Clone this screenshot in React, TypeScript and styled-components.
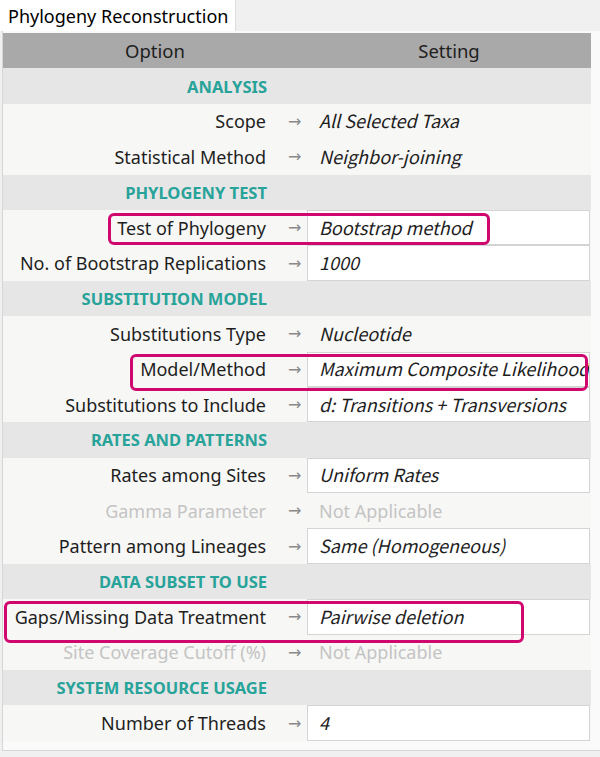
import React from "react";
import styled, { createGlobalStyle } from "styled-components";

const Global = createGlobalStyle`
  html, body { margin: 0; padding: 0; background: #f0f0f0; }
  body { font-family: "Noto Sans", "Open Sans", sans-serif; }
`;

const Page = styled.div`
  width: 600px;
  height: 757px;
  background: #f0f0f0;
  overflow: hidden;
`;

const TabBar = styled.div`
  display: flex;
  height: 31px;
`;

const Tab = styled.div`
  width: 227px;
  padding-left: 8px;
  background: #ffffff;
  border-right: 1px solid #dcdcdc;
  display: flex;
  align-items: center;
  font-size: 18px;
  color: #000;
`;

const Panel = styled.div`
  margin-left: 2px;
  width: 593px;
  border: 1px solid #d6d6d6;
  border-top: none;
  background: #fafafa;
  padding: 2px 5px 9px 0;
`;

const Table = styled.div`
  display: flex;
  flex-direction: column;
  width: 588px;
`;

const Row = styled.div<{ $kind: "header" | "section" | "item" }>`
  position: relative;
  display: grid;
  grid-template-columns: 265px 39px 1fr;
  height: 35.4px;
  align-items: stretch;
  background: ${(p) =>
    p.$kind === "header" ? "#a9a9a9" : p.$kind === "section" ? "#e6e6e6" : "#f7f7f5"};
`;

const HeaderCell = styled.div<{ $span: string }>`
  grid-column: ${(p) => p.$span};
  display: flex;
  align-items: center;
  justify-content: center;
  font-size: 18.5px;
  color: #1e1e1e;
`;

const SectionTitle = styled.div`
  grid-column: 1 / 2;
  display: flex;
  align-items: center;
  justify-content: flex-end;
  padding-right: 1px;
  font-size: 16.5px;
  font-weight: 700;
  color: #27a39a;
`;

const OptionLabel = styled.div<{ $disabled?: boolean }>`
  display: flex;
  align-items: center;
  justify-content: flex-end;
  padding-right: 2px;
  font-size: 18px;
  white-space: nowrap;
  color: ${(p) => (p.$disabled ? "#c4c4c4" : "#1e1e1e")};
`;

const Arrow = styled.div`
  display: flex;
  align-items: center;
  justify-content: flex-start;
  padding-left: 20px;
  font-family: "DejaVu Sans", sans-serif;
  font-size: 16px;
  color: #8a8a8a;
`;

const Value = styled.div<{ $boxed?: boolean; $disabled?: boolean }>`
  display: flex;
  align-items: center;
  padding: 0 0 ${(p) => (p.$disabled ? 0 : 2)}px 11px;
  margin-right: 1px;
  overflow: hidden;
  white-space: nowrap;
  font-size: 18px;
  font-family: ${(p) =>
    p.$disabled ? '"Noto Sans", sans-serif' : '"Noto Sans CJK SC", "Noto Sans", sans-serif'};
  font-style: ${(p) => (p.$disabled ? "normal" : "italic")};
  color: ${(p) => (p.$disabled ? "#c4c4c4" : "#1e1e1e")};
  background: ${(p) => (p.$boxed ? "#ffffff" : "transparent")};
  border: 1px solid ${(p) => (p.$boxed ? "#d4d4d4" : "transparent")};
`;

const Highlight = styled.div`
  position: absolute;
  border: 3px solid #d0076f;
  border-radius: 6px;
  pointer-events: none;
  box-sizing: border-box;
  z-index: 2;
`;

type Item =
  | { kind: "section"; title: string }
  | {
      kind: "item";
      label: string;
      value: string;
      boxed?: boolean;
      disabled?: boolean;
      hl?: { left: number; width: number; top: number; height: number };
    };

const items: Item[] = [
  { kind: "section", title: "ANALYSIS" },
  { kind: "item", label: "Scope", value: "All Selected Taxa" },
  { kind: "item", label: "Statistical Method", value: "Neighbor-joining" },
  { kind: "section", title: "PHYLOGENY TEST" },
  {
    kind: "item",
    label: "Test of Phylogeny",
    value: "Bootstrap method",
    boxed: true,
    hl: { left: 105, width: 382, top: 3, height: 32 },
  },
  { kind: "item", label: "No. of Bootstrap Replications", value: "1000", boxed: true },
  { kind: "section", title: "SUBSTITUTION MODEL" },
  { kind: "item", label: "Substitutions Type", value: "Nucleotide" },
  {
    kind: "item",
    label: "Model/Method",
    value: "Maximum Composite Likelihood",
    boxed: true,
    hl: { left: 127, width: 458, top: 2, height: 37 },
  },
  { kind: "item", label: "Substitutions to Include", value: "d: Transitions + Transversions", boxed: true },
  { kind: "section", title: "RATES AND PATTERNS" },
  { kind: "item", label: "Rates among Sites", value: "Uniform Rates", boxed: true },
  { kind: "item", label: "Gamma Parameter", value: "Not Applicable", disabled: true },
  { kind: "item", label: "Pattern among Lineages", value: "Same (Homogeneous)", boxed: true },
  { kind: "section", title: "DATA SUBSET TO USE" },
  {
    kind: "item",
    label: "Gaps/Missing Data Treatment",
    value: "Pairwise deletion",
    boxed: true,
    hl: { left: 1, width: 520, top: 2, height: 42 },
  },
  { kind: "item", label: "Site Coverage Cutoff (%)", value: "Not Applicable", disabled: true },
  { kind: "section", title: "SYSTEM RESOURCE USAGE" },
  { kind: "item", label: "Number of Threads", value: "4", boxed: true },
];

export default function App() {
  return (
    <Page>
      <Global />
      <TabBar>
        <Tab>Phylogeny Reconstruction</Tab>
      </TabBar>
      <Panel>
        <Table>
          <Row $kind="header">
            <HeaderCell $span="1 / 3">Option</HeaderCell>
            <HeaderCell $span="3 / 4">Setting</HeaderCell>
          </Row>
          {items.map((it, i) =>
            it.kind === "section" ? (
              <Row key={i} $kind="section">
                <SectionTitle>{it.title}</SectionTitle>
              </Row>
            ) : (
              <Row key={i} $kind="item">
                <OptionLabel $disabled={it.disabled}>{it.label}</OptionLabel>
                <Arrow>→</Arrow>
                <Value $boxed={it.boxed} $disabled={it.disabled}>
                  {it.value}
                </Value>
                {it.hl && (
                  <Highlight
                    style={{
                      left: it.hl.left,
                      width: it.hl.width,
                      top: it.hl.top,
                      height: it.hl.height,
                    }}
                  />
                )}
              </Row>
            )
          )}
        </Table>
      </Panel>
    </Page>
  );
}
